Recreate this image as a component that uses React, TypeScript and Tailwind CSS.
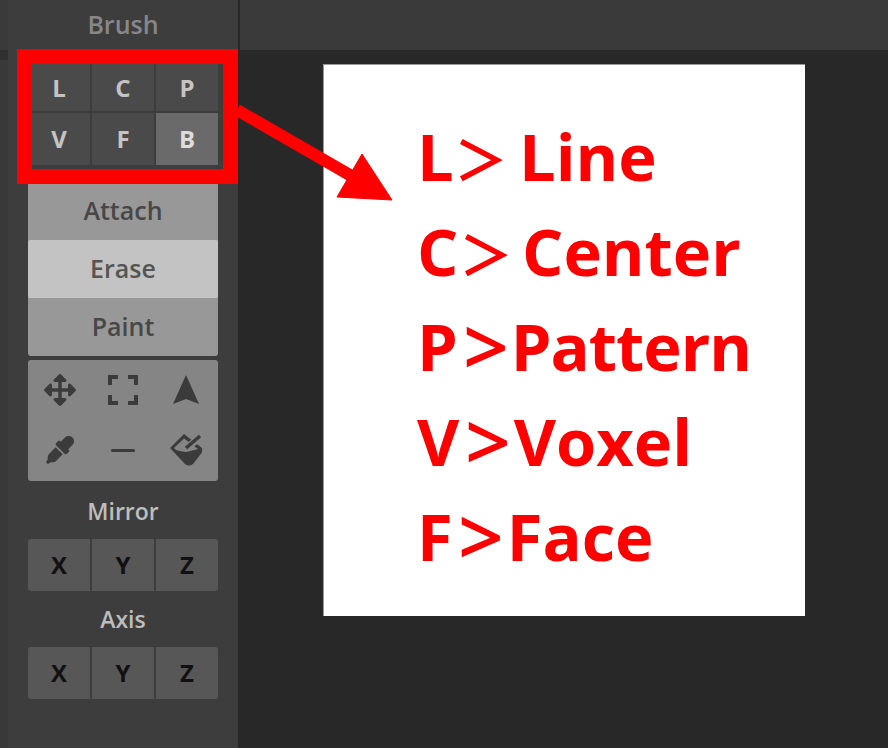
import React from "react";
import { FaArrowsAlt, FaEyeDropper } from "react-icons/fa";

const font = { fontFamily: '"Open Sans", "Noto Sans", sans-serif' };

const AxisRow = () => (
  <div className="mx-5 flex h-[52px] gap-[2px]">
    {["X", "Y", "Z"].map((l, i) => (
      <div
        key={l}
        className={`flex flex-1 items-center justify-center bg-[#575757] text-[24px] font-bold text-[#111111] ${
          i === 0 ? "rounded-l-[3px]" : i === 2 ? "rounded-r-[3px]" : ""
        }`}
      >
        {l}
      </div>
    ))}
  </div>
);

const Brush = ({ label, active, first }: { label: string; active?: boolean; first?: boolean }) => (
  <div
    className={`flex items-center justify-center text-[24px] font-bold ${first ? "pr-1" : ""} ${
      active ? "bg-[#6a6a6a] text-[#dddddd]" : "bg-[#4a4a4a] text-[#c4c4c4]"
    }`}
  >
    {label}
  </div>
);

const Mode = ({ label, active }: { label: string; active?: boolean }) => (
  <div
    className={`flex flex-1 items-center justify-center text-[25px] font-semibold ${
      active ? "rounded-[2px] bg-[#c3c3c3] text-[#555555]" : "text-[#474747]"
    }`}
  >
    {label}
  </div>
);

const FrameIcon = () => (
  <svg width="32" height="32" viewBox="0 0 32 32" fill="none" stroke="#3b3b3b" strokeWidth="4">
    <path d="M3 11V3h8M21 3h8v8M29 21v8h-8M11 29H3v-8" />
  </svg>
);

const ArrowIcon = () => (
  <svg width="28" height="32" viewBox="0 0 28 32" fill="#3b3b3b">
    <path d="M14 1 27 30 14 25 1 30Z" />
  </svg>
);

const MinusIcon = () => <div className="h-[3px] w-[24px] rounded-full bg-[#3b3b3b]" />;

const BucketIcon = () => (
  <svg width="34" height="34" viewBox="0 0 34 34" fill="none">
    <path d="M1 15 15 1 33 15Q34 19 31 22L24 31Q20 34 16 31Z" fill="#3b3b3b" />
    <path d="M5 15 15 5.500 29 16Q22 18 17 19 11 18.500 7 17Z" fill="#858585" />
    <path d="M18 15 31 4" stroke="#858585" strokeWidth="7" />
    <path d="M17 15 31 3" stroke="#3b3b3b" strokeWidth="3.500" />
  </svg>
);

const Tools = () => (
  <div className="mx-5 mt-1 grid h-[121px] grid-cols-3 rounded-[3px] bg-[#858585]">
    <div className="flex items-center justify-center text-[#3b3b3b]"><FaArrowsAlt size={32} /></div>
    <div className="flex items-center justify-center"><FrameIcon /></div>
    <div className="flex items-center justify-center"><ArrowIcon /></div>
    <div className="flex items-center justify-center text-[#3b3b3b]"><FaEyeDropper size={28} /></div>
    <div className="flex items-center justify-center"><MinusIcon /></div>
    <div className="flex items-center justify-center"><BucketIcon /></div>
  </div>
);

const CJK = { fontFamily: '"Noto Sans CJK JP", sans-serif' };

// first two lines of the picture use the full width sign, the others the ascii one
const Line = ({ name, nameW, wordCls, wide, word }: { name: string; nameW: string; wordCls: string; wide?: boolean; word: string }) => (
  <div className="flex h-[95px] items-baseline whitespace-nowrap">
    <span className={nameW}>{name}</span>
    {wide ? (
      <span style={CJK} className="text-[54px] font-bold leading-[40px]">＞</span>
    ) : (
      <span className="translate-y-[5px] text-[80px] font-semibold leading-[40px]">&gt;</span>
    )}
    <span className={wordCls}>{word}</span>
  </div>
);

export default function App() {
  return (
    <div style={font} className="relative flex h-[748px] w-[888px] overflow-hidden bg-[#282828]">
      <div className="flex w-2 shrink-0 flex-col bg-[#393939]">
        <div className="h-[50px] rounded-br-[3px] bg-[#3a3a3a]" />
        <div className="h-[10px] bg-[#303030]" />
      </div>
      <aside className="flex w-[230px] shrink-0 flex-col bg-[#3d3d3d]">
        <div className="flex h-[50px] items-center justify-center text-[25px] font-semibold text-[#878787]">
          Brush
        </div>
        <div className="ml-[24px] mr-[20px] mt-[14px] grid h-[101px] grid-cols-[58px_62px_62px] grid-rows-[47px_52px] gap-[2px]">
          <Brush label="L" first />
          <Brush label="C" />
          <Brush label="P" />
          <Brush label="V" first />
          <Brush label="F" />
          <Brush label="B" active />
        </div>
        <div className="mx-5 mt-[17px] flex h-[174px] flex-col rounded-b-[3px] bg-[#989898]">
          <Mode label="Attach" />
          <Mode label="Erase" active />
          <Mode label="Paint" />
        </div>
        <Tools />
        <div className="flex h-[58px] items-center justify-center pt-[3px] text-[23px] font-semibold text-[#bdbdbd]">
          Mirror
        </div>
        <AxisRow />
        <div className="flex h-[56px] items-center justify-center text-[23px] font-semibold text-[#bdbdbd]">
          Axis
        </div>
        <AxisRow />
      </aside>

      <main className="flex flex-1 flex-col">
        <div className="ml-[2px] h-[50px] bg-[#3a3a3a]" />
        <div className="ml-[85px] mt-[14px] flex h-[552px] w-[482px] flex-col border-l border-t border-[#999999] bg-white pl-[93px] pt-[49px] text-[65px] font-bold leading-[84px] text-[#ff0000]">
          <Line name="L" nameW="w-[37px]" wordCls="ml-[11px]" wide word="Line" />
          <Line name="C" nameW="w-[42px]" wordCls="ml-[9px]" wide word="Center" />
          <Line name="P" nameW="w-[46px]" wordCls="ml-[2px] tracking-[-1px]" word="Pattern" />
          <Line name="V" nameW="w-[48px]" wordCls="ml-[3px]" word="Voxel" />
          <Line name="F" nameW="w-[41px]" wordCls="ml-[3px]" word="Face" />
        </div>
      </main>

      {/* annotation over the brush grid */}
      <div className="absolute left-[17px] top-[49px] h-[135px] w-[221px] border-[15px] border-[#ff0000]" />
      <svg className="absolute left-[230px] top-[100px]" width="170" height="110" viewBox="0 0 170 110">
        <path d="M7 10 125 78" stroke="#ff0000" strokeWidth="12" />
        <path d="M162 100 107 97 132 54Z" fill="#ff0000" stroke="#ff0000" strokeWidth="1" />
      </svg>
    </div>
  );
}
